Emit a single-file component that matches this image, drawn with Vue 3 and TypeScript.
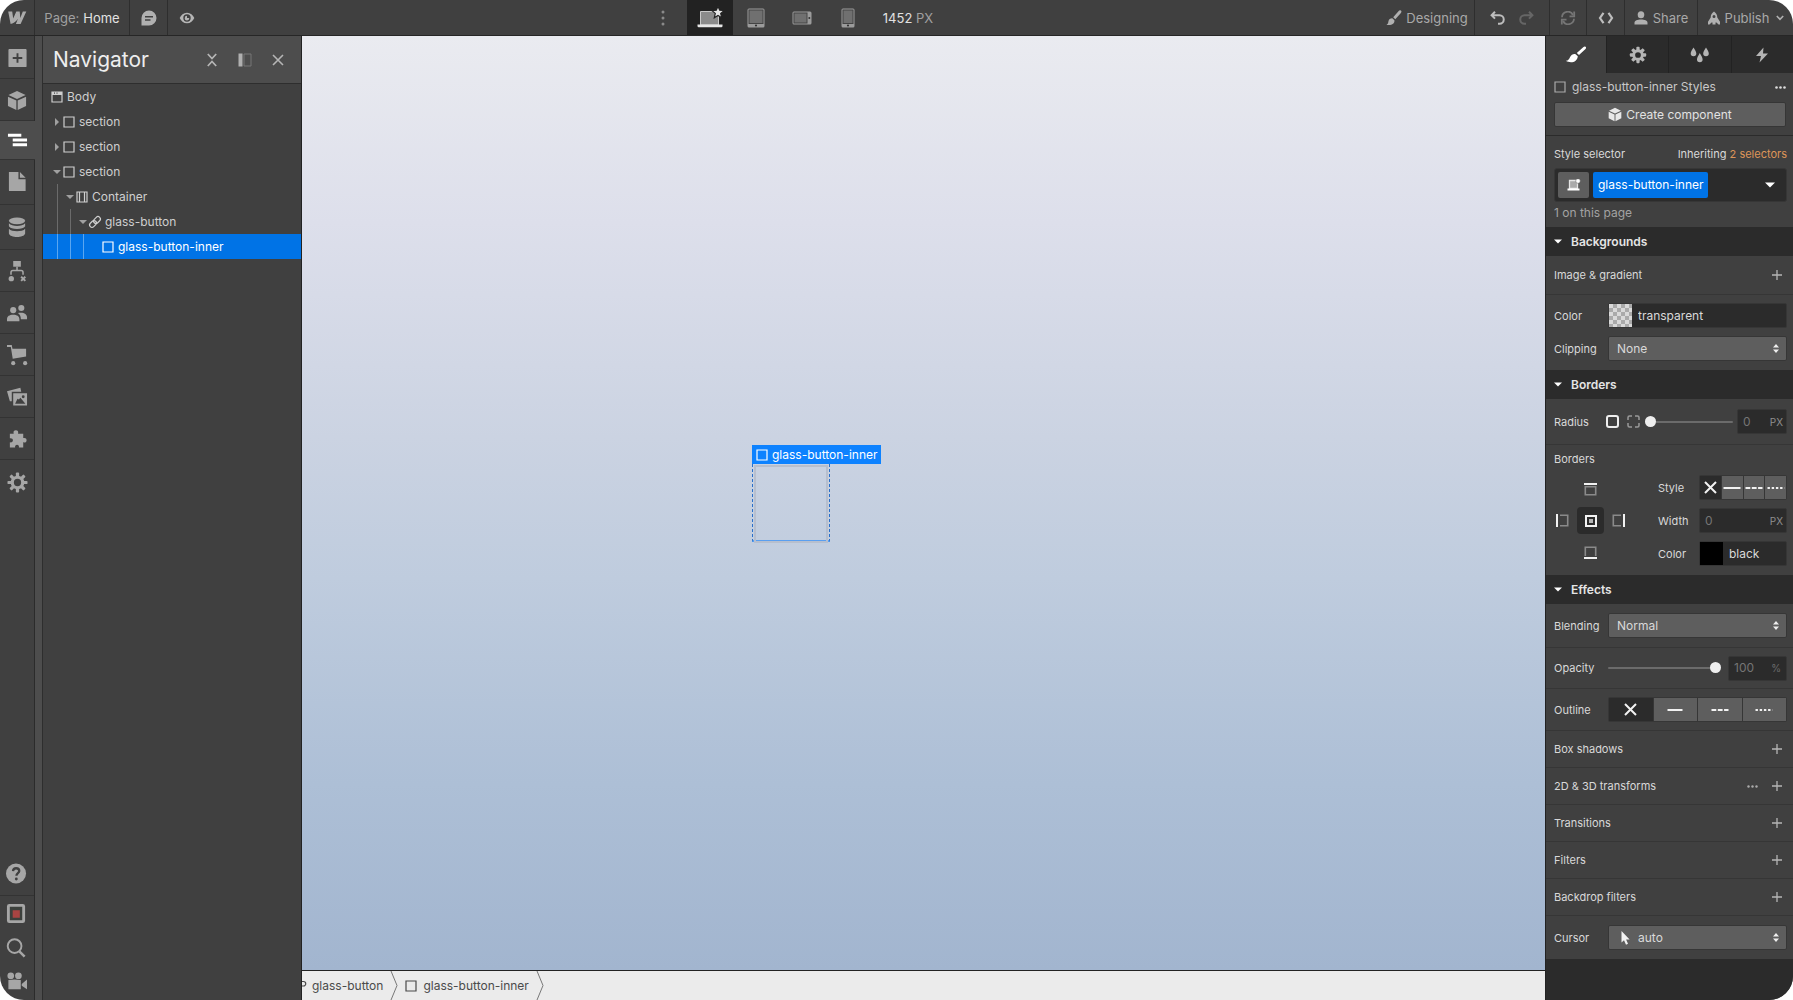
<script setup lang="ts">
import { ref } from 'vue'

interface TreeRow {
  label: string
  level: number
  icon: 'body' | 'box' | 'container' | 'link'
  arrow: 'none' | 'right' | 'down'
  selected?: boolean
}

const tree: TreeRow[] = [
  { label: 'Body', level: 0, icon: 'body', arrow: 'none' },
  { label: 'section', level: 0, icon: 'box', arrow: 'right' },
  { label: 'section', level: 0, icon: 'box', arrow: 'right' },
  { label: 'section', level: 0, icon: 'box', arrow: 'down' },
  { label: 'Container', level: 1, icon: 'container', arrow: 'down' },
  { label: 'glass-button', level: 2, icon: 'link', arrow: 'down' },
  { label: 'glass-button-inner', level: 3, icon: 'box', arrow: 'none', selected: true },
]

const effects = ['Box shadows', '2D & 3D transforms', 'Transitions', 'Filters', 'Backdrop filters']
const lineStyles = ['none', 'solid', 'dashed', 'dotted']

const radius = ref(0)
const opacity = ref(100)
const borderStyle = ref('none')
const outlineStyle = ref('none')
const gearTeeth = [0, 45, 90, 135, 180, 225, 270, 315]
</script>

<template>
  <div class="app">
    <header class="topbar">
      <button class="cell logo" aria-label="Webflow menu">
        <svg width="20" height="14" viewBox="0 0 20 14"><path fill="#ababab" d="M19.300.5 13.600 13H8.900l2-5.200C9.300 10.400 7 12.200 3.600 13L1.200.500h4l1 7L9.300.500h3.400l.6 6.500L15.800.500z" /></svg>
      </button>
      <button class="cell page"><span class="muted">Page:</span><span>Home</span></button>
      <button class="cell comment" aria-label="Comments">
        <svg width="16" height="16" viewBox="0 0 16 16"><path fill="#b0b0b0" d="M8 .5a7.500 7.500 0 1 1 0 15H.5V8A7.500 7.500 0 0 1 8 .5z" /><path stroke="#404040" stroke-width="1.500" d="M4 6.800h8M4 10h5.500" /></svg>
      </button>
      <button class="cell eye" aria-label="Preview">
        <svg width="16" height="12" viewBox="0 0 16 12"><path fill="#b5b5b5" fill-rule="evenodd" d="M8 .7c3.500 0 6 2.300 7.300 5.300C14 9 11.500 11.300 8 11.300S2 9 .7 6C2 3 4.500.7 8 .7zM8 2.300a3.700 3.700 0 1 0 0 7.400 3.700 3.700 0 0 0 0-7.400z" /><path fill="#b5b5b5" d="M8 3.800v2.200h2.300A2.300 2.300 0 1 1 8 3.800z" /></svg>
      </button>
      <div class="devices">
        <button class="cell dots" aria-label="More breakpoints">
          <svg width="4" height="16" viewBox="0 0 4 16" fill="#8a8a8a"><circle cx="2" cy="2" r="1.500" /><circle cx="2" cy="8" r="1.500" /><circle cx="2" cy="14" r="1.500" /></svg>
        </button>
        <button class="device current" aria-label="Desktop">
          <svg width="26" height="24" viewBox="0 0 26 24"><path fill="#8b8b8b" stroke="#c9c9c9" d="M3.500 5.500h18V19h-18z" /><path fill="#e6e6e6" d="M.500 18.500h25V20a1.200 1.200 0 0 1-1.200 1.200H1.700A1.200 1.200 0 0 1 .5 20z" /><path fill="#e6e6e6" stroke="#222" stroke-width="1.200" d="m21 .2 1.700 4 4.300.4-3.300 2.800 1 4.300L21 9.400l-3.700 2.300 1-4.300L15 4.600l4.300-.4z" /></svg>
        </button>
        <button class="device" aria-label="Tablet">
          <svg width="18" height="20" viewBox="0 0 18 20"><rect x=".5" y=".5" width="17" height="19" rx="1.500" fill="#9b9b9b" /><rect x="2" y="2" width="14" height="13.500" fill="#707070" stroke="#444" /><circle cx="9" cy="17.500" r="1.100" fill="#333" /></svg>
        </button>
        <button class="device" aria-label="Mobile landscape">
          <svg width="20" height="14" viewBox="0 0 20 14"><rect x=".5" y=".5" width="19" height="13" rx="1.500" fill="#9b9b9b" /><rect x="2" y="2" width="13" height="10" fill="#707070" stroke="#444" /><circle cx="17.300" cy="7" r="1" fill="#333" /></svg>
        </button>
        <button class="device" aria-label="Mobile portrait">
          <svg width="14" height="20" viewBox="0 0 14 20"><rect x=".5" y=".5" width="13" height="19" rx="1.500" fill="#9b9b9b" /><rect x="2" y="2" width="10" height="13.500" fill="#707070" stroke="#444" /><circle cx="7" cy="17.500" r="1.100" fill="#333" /></svg>
        </button>
        <div class="width-readout"><b>1452</b> <span>PX</span></div>
      </div>
      <button class="cell designing">
        <svg width="16" height="16" viewBox="0 0 16 16" fill="#b0b0b0"><path d="M14.800.600c1 .7.700 1.700.1 2.400L9.300 9.200 7.200 7.300 12.700 1c.6-.6 1.300-.9 2.100-.4zM6.300 8.300l2.100 1.900c.5 3.200-2.700 5.600-7.900 4.700 1.800-.8 1.600-2.100 2-3.800.5-1.900 1.900-2.900 3.800-2.800z" /></svg>
        <span>Designing</span>
      </button>
      <div class="cell history">
        <button aria-label="Undo"><svg width="15" height="14" viewBox="0 0 15 14" fill="none" stroke="#bdbdbd" stroke-width="2"><path d="M5 .800 1.600 4.200 5 7.600M1.800 4.200H9.500a4.200 4.200 0 0 1 0 8.500H8" /></svg></button>
        <button aria-label="Redo"><svg width="15" height="14" viewBox="0 0 15 14" fill="none" stroke="#666" stroke-width="2"><path d="m10 .8 3.400 3.400L10 7.600M13.200 4.200H5.500a4.200 4.200 0 0 0 0 8.500H7" /></svg></button>
      </div>
      <button class="cell sync" aria-label="Save state">
        <svg width="16" height="14" viewBox="0 0 16 14" fill="none" stroke="#757575" stroke-width="1.800"><path d="M2 6.200A5.800 5.800 0 0 1 13 4M14 7.800A5.800 5.800 0 0 1 3 10" /><path d="M14.200.5v4.800H9.500M1.800 13.500V8.700h4.700" /></svg>
      </button>
      <button class="cell code" aria-label="Export code">
        <svg width="16" height="12" viewBox="0 0 16 12" fill="none" stroke="#bdbdbd" stroke-width="2.200"><path d="M5.500.8 2 6l3.500 5.200M10.500.8 14 6l-3.500 5.200" /></svg>
      </button>
      <button class="cell share">
        <svg width="14" height="14" viewBox="0 0 14 14" fill="#b0b0b0"><ellipse cx="7" cy="3.700" rx="3.300" ry="3.500" /><path d="M.5 13.500v-1.700C.5 9.500 3.500 8.600 7 8.600s6.500.9 6.500 3.200v1.700z" /></svg>
        <span>Share</span>
      </button>
      <button class="cell publish">
        <svg width="14" height="14" viewBox="0 0 14 14"><path fill="#b0b0b0" fill-rule="evenodd" d="M7 .5c2 1.500 3.300 3.200 3.300 6L13 10.700v2.800h-1.500l-2-2h-1v2h-3v-2h-1l-2 2H1v-2.800L3.700 6.500c0-2.800 1.300-4.500 3.300-6zM7 4a1.500 1.500 0 1 0 0 3 1.500 1.500 0 0 0 0-3z" /></svg>
        <span>Publish</span>
        <svg class="chev" width="8" height="6" viewBox="0 0 8 6"><path fill="none" stroke="#b0b0b0" stroke-width="1.600" d="m.800 1 3.200 3.300L7.200 1" /></svg>
      </button>
    </header>

    <div class="workspace">
      <nav class="rail" aria-label="Tools">
        <button aria-label="Add"><svg viewBox="0 0 22 22"><rect x="1.500" y="1" width="19" height="19" rx="1" fill="#a6a6a6" /><path stroke="#404040" stroke-width="2" d="M11 5.500v10M6 10.500h10" /></svg></button>
        <button aria-label="Components"><svg viewBox="0 0 22 22" fill="#a6a6a6"><path d="m10.500 1 9 4.200-9 4.200-9-4.200zM1 7l8.800 4.100V21L1 16.800zM20 7l-8.800 4.100V21l8.800-4.200z" /></svg></button>
        <button class="short on" aria-label="Navigator"><svg viewBox="0 0 22 22" fill="#fff"><path d="M1 4h14v3H1zM6 9h15v3H6zM6 14h15v3H6z" /></svg></button>
        <button class="tall" aria-label="Pages"><svg viewBox="0 0 22 22" fill="#a6a6a6"><path d="M2 0h10v7.500h7.500V20H3a1 1 0 0 1-1-1zM13.500 0l6 6h-6z" /></svg></button>
        <button class="tall" aria-label="CMS"><svg viewBox="0 0 22 22" fill="#a6a6a6"><ellipse cx="10.500" cy="4" rx="8.500" ry="3.500" /><path d="M2 6.500c1.500 2.200 5 2.800 8.500 2.800S17.500 8.700 19 6.500v3.300c-1 2-4.500 2.800-8.500 2.800S3 11.800 2 9.800zM2 12.200c1.500 1.900 5 2.600 8.500 2.600s7-.7 8.500-2.600v5.200c-.5 2.500-4.500 3.600-8.500 3.600S2.500 19.900 2 17.400z" /></svg></button>
        <button aria-label="Logic"><svg viewBox="0 0 22 22"><path fill="#a6a6a6" d="M6.500 0h8v6h-8z" /><circle cx="4.500" cy="18.500" r="2.800" fill="#a6a6a6" /><path fill="none" stroke="#a6a6a6" stroke-width="1.600" d="M10.500 6v4M4.200 14.500V12a2 2 0 0 1 2-2h8.600a2 2 0 0 1 2 2v2.500" /><path stroke="#a6a6a6" stroke-width="2" d="m14.800 16.500 4.400 4.400m0-4.400-4.400 4.400" /></svg></button>
        <button aria-label="Users"><svg viewBox="0 0 22 22" fill="#a6a6a6"><circle cx="6.500" cy="7.500" r="3.200" /><circle cx="15" cy="5.300" r="3.200" /><path d="M0 19v-2c0-3 2.500-4.600 6.500-4.600S13 14 13 17v2zM11.500 10.600c5.500-1.200 9.500.8 9.500 4.400v2h-6.500c0-2.900-1-4.900-3-6.400z" /></svg></button>
        <button aria-label="Ecommerce"><svg viewBox="0 0 22 22" fill="#a6a6a6"><path d="M0 0h5l.7 4H20v8L6 14.500 4 2H0z" /><circle cx="6.500" cy="19" r="2.200" /><circle cx="19" cy="19" r="2.200" /></svg></button>
        <button aria-label="Assets"><svg viewBox="0 0 22 22"><path fill="#a6a6a6" d="M0 4.500 14 .8l.9 4.200H5v10H3z" /><path fill="#a6a6a6" fill-rule="evenodd" d="M6.500 6.500H21v13H6.500zm2 11h10.800L14 11.200l-1.500 2-1.500-1zM17 8.700a1.500 1.500 0 1 0 0 3 1.500 1.500 0 0 0 0-3z" /></svg></button>
        <button aria-label="Apps"><svg viewBox="0 0 22 22" fill="#a6a6a6"><path d="M3 5h4c-.6-3 .5-3.800 2.300-3.800S12.200 2 11.600 5H17v4.500c2.300-.5 3.500.4 3.500 2.200S19.300 14.500 17 14v5.500h-4.500c.3-2-.6-3-2-3s-2.300 1-2 3H3V14c2.200.4 3.200-.8 3.200-2.200S5.200 9.500 3 9.700z" /></svg></button>
        <button aria-label="Settings" class="last"><svg viewBox="0 0 22 22"><g fill="#a6a6a6"><rect v-for="a in gearTeeth" :key="a" x="9.300" y="0.500" width="3.400" height="5" rx="1" :transform="`rotate(${a} 11 11)`" /></g><circle cx="11" cy="11" r="5.500" fill="none" stroke="#a6a6a6" stroke-width="3.400" /></svg></button>
        <div class="rail-foot">
          <button class="help" aria-label="Help"><svg viewBox="0 0 22 22"><circle cx="10.500" cy="11" r="10.500" fill="#a6a6a6" /><path fill="none" stroke="#404040" stroke-width="2.400" d="M7.300 8.500c.2-2 1.500-3 3.300-3s3.300 1.200 3.300 2.900c0 2.300-3 2.400-3 5" /><circle cx="10.800" cy="16.800" r="1.500" fill="#404040" /></svg></button>
          <button aria-label="Record"><svg viewBox="0 0 22 22"><rect x="2.500" y="2.500" width="16" height="17" rx="1" fill="#3c403c" stroke="#a6a6a6" stroke-width="3" /><path fill="#a94442" d="M7 7.500h7.500v8H7z" /></svg></button>
          <button aria-label="Search"><svg viewBox="0 0 22 22" fill="none" stroke="#a6a6a6"><circle cx="9" cy="9.500" r="7.200" stroke-width="2" /><path stroke-width="2.600" d="m14 15 5.500 5.500" /></svg></button>
          <button aria-label="Video"><svg viewBox="0 0 22 22" fill="#a6a6a6"><circle cx="5" cy="5" r="3.500" /><circle cx="13" cy="5" r="3.500" /><path d="M2.500 9.500 9 8.800l6.500.7V19h-13zM16.500 13.500 22 9v10l-5.500-3.500z" /></svg></button>
        </div>
      </nav>

      <aside class="navigator">
        <div class="nav-head">
          <h1>Navigator</h1>
          <button aria-label="Collapse all"><svg width="12" height="14" viewBox="0 0 12 14" fill="none" stroke="#b5b5b5" stroke-width="1.700"><path d="m1.800 1 4.200 4.500L10.200 1M1.800 13 6 8.500l4.200 4.500" /></svg></button>
          <button aria-label="Pin panel"><svg width="14" height="14" viewBox="0 0 14 14"><path fill="#b0b0b0" d="M.5.500h4v13h-4z" /><path fill="none" stroke="#777" d="M6 1h7v12H6z" /></svg></button>
          <button aria-label="Close"><svg width="12" height="12" viewBox="0 0 12 12" stroke="#b5b5b5" stroke-width="1.600"><path d="m1 1 10 10M11 1 1 11" /></svg></button>
        </div>
        <ul class="tree">
          <li v-for="(row, i) in tree" :key="i" :class="{ selected: row.selected, root: row.icon === 'body' }">
            <span v-for="g in row.level" :key="g" class="guide"></span>
            <span v-if="row.icon !== 'body'" class="arrow">
              <svg v-if="row.arrow === 'right'" width="8" height="8" viewBox="0 0 8 8"><path fill="#a0a0a0" d="M2 0v8l4-4z" /></svg>
              <svg v-else-if="row.arrow === 'down'" width="8" height="8" viewBox="0 0 8 8"><path fill="#a0a0a0" d="M0 2h8L4 6z" /></svg>
            </span>
            <svg class="node" width="12" height="12" viewBox="0 0 12 12" fill="none" stroke="currentColor" stroke-width="1.200">
              <template v-if="row.icon === 'body'"><path d="M1 1h10v10H1z" /><path fill="currentColor" stroke="none" d="M1 1h10v3H1z" /><path stroke="#404040" stroke-width="1" d="M3.500 1.500v1.200M6 1.500v1.200" /></template>
              <path v-else-if="row.icon === 'box'" d="M1 1h10v10H1z" />
              <path v-else-if="row.icon === 'container'" d="M1 1h10v10H1zM3.500 1v10M8.500 1v10" />
              <g v-else transform="rotate(-45 6 6)"><rect x="-.6" y="3.600" width="7.600" height="4.800" rx="2.400" /><rect x="5" y="3.600" width="7.600" height="4.800" rx="2.400" /></g>
            </svg>
            <span>{{ row.label }}</span>
          </li>
        </ul>
      </aside>

      <main class="stage">
        <div class="canvas">
          <div class="selection">
            <div class="tag"><svg width="12" height="12" viewBox="0 0 12 12"><path fill="none" stroke="#fff" stroke-width="1.200" d="M1 1h10v10H1z" /></svg>glass-button-inner</div>
            <div class="element"></div>
          </div>
        </div>
        <nav class="crumbs" aria-label="Breadcrumb">
          <svg class="cut" width="5" height="12" viewBox="0 0 5 12"><path fill="none" stroke="#4a4a4a" stroke-width="1.200" d="M0 1.500h1.500a2.200 2.200 0 0 1 0 4.500H0" /></svg>
          <a href="#">glass-button</a>
          <svg class="sep" width="8" height="29" viewBox="0 0 8 29"><path fill="none" stroke="#777" d="m1 0 6 14.500L1 29" /></svg>
          <svg class="crumb-box" width="12" height="12" viewBox="0 0 12 12"><path fill="none" stroke="#4a4a4a" stroke-width="1.200" d="M1 1h10v10H1z" /></svg>
          <a href="#">glass-button-inner</a>
          <svg class="sep" width="8" height="29" viewBox="0 0 8 29"><path fill="none" stroke="#777" d="m1 0 6 14.500L1 29" /></svg>
        </nav>
      </main>

      <aside class="styles">
        <div class="tabs">
          <button class="active" aria-label="Style"><svg width="22" height="18" viewBox="0 0 22 18" fill="#fff"><path d="M20.500.800c1 .8.500 1.600 0 2.200L14 9l-2.200-1.900L18.500 1c.6-.5 1.300-.7 2-.2zM10.600 8.200l2.200 2c-.3 5.500-6.600 7.800-12 4.600 2.500.2 3.300-1.600 4.300-3.700 1.200-2.400 3.200-3.400 5.500-2.900z" /></svg></button>
          <button aria-label="Settings"><svg width="18" height="18" viewBox="0 0 22 22"><g fill="#b5b5b5"><rect v-for="a in gearTeeth" :key="a" x="9" y="1" width="4" height="5" rx="1" :transform="`rotate(${a} 11 11)`" /></g><circle cx="11" cy="11" r="5.300" fill="none" stroke="#b5b5b5" stroke-width="3.600" /></svg></button>
          <button aria-label="Style manager"><svg width="20" height="16" viewBox="0 0 20 16" fill="#b5b5b5"><path d="M3.500.5C5 3.300 6.300 4.700 6.300 6.500a2.800 2.800 0 0 1-5.600 0C.7 4.700 2 3.300 3.500.5zM16 .5c1.500 2.800 2.800 4.200 2.800 6a2.800 2.800 0 0 1-5.600 0c0-1.800 1.300-3.200 2.800-6zM9.800 6c1.500 2.800 2.800 4.700 2.800 6.500a2.800 2.800 0 0 1-5.600 0c0-1.800 1.300-3.700 2.800-6.500z" /></svg></button>
          <button aria-label="Interactions"><svg width="14" height="16" viewBox="0 0 14 16" fill="#b5b5b5"><path d="M8.500.5 1 9h5L4.500 15.500 13 6.500H8z" /></svg></button>
        </div>

        <div class="title-block">
          <div class="title"><svg width="12" height="12" viewBox="0 0 12 12"><path fill="none" stroke="#aaa" stroke-width="1.200" d="M1 1h10v10H1z" /></svg><span>glass-button-inner Styles</span>
            <button aria-label="More"><svg width="11" height="3" viewBox="0 0 11 3" fill="#ddd"><circle cx="1.500" cy="1.500" r="1.300" /><circle cx="5.500" cy="1.500" r="1.300" /><circle cx="9.500" cy="1.500" r="1.300" /></svg></button></div>
          <button class="create"><svg width="14" height="15" viewBox="0 0 21 22" fill="#e8e8e8"><path d="m10.500 1 9 4.200-9 4.200-9-4.200zM1 7l8.800 4.100V21L1 16.800zM20 7l-8.800 4.100V21l8.800-4.200z" /></svg>Create component</button>
        </div>

        <div class="selector-block">
          <div class="selector-labels"><span>Style selector</span><span>Inheriting <a href="#">2 selectors</a></span></div>
          <div class="selector">
            <button class="state" aria-label="Breakpoint"><svg width="14" height="12" viewBox="0 0 14 12"><path fill="#aaa" stroke="#e5e5e5" stroke-width="1.300" d="M2.500 1.500h8v8h-8z" /><path stroke="#fff" stroke-width="2" d="M.5 10.500h12" /><circle cx="11" cy="2" r="2.300" fill="#fff" stroke="#5e5e5e" stroke-width=".5" /></svg></button>
            <button class="chip">glass-button-inner</button>
            <button class="drop" aria-label="Open selectors"><svg width="10" height="6" viewBox="0 0 10 6"><path fill="#fff" d="M0 .5h10l-5 5z" /></svg></button>
          </div>
          <p>1 on this page</p>
        </div>

        <h2><svg width="8" height="5" viewBox="0 0 8 5"><path fill="#fff" d="M0 .5h8l-4 4z" /></svg>Backgrounds</h2>
        <div class="row gradient"><span>Image &amp; gradient</span><button class="plus" aria-label="Add background"><svg width="10" height="10" viewBox="0 0 10 10"><path stroke="#b5b5b5" stroke-width="1.300" d="M5 0v10M0 5h10" /></svg></button></div>
        <div class="fields line">
          <div class="field"><label for="bg-color">Color</label><div class="swatch-input"><span class="swatch checks"></span><input id="bg-color" value="transparent" /></div></div>
          <div class="field"><label for="clipping">Clipping</label><div class="pick"><select id="clipping"><option>None</option></select><svg width="6" height="9" viewBox="0 0 6 9"><path fill="#eee" d="M0 3.500h6L3 0zM0 5.500h6L3 9z" /></svg></div></div>
        </div>

        <h2><svg width="8" height="5" viewBox="0 0 8 5"><path fill="#fff" d="M0 .5h8l-4 4z" /></svg>Borders</h2>
        <div class="row radius">
          <label for="radius">Radius</label>
          <button aria-label="All corners"><svg width="13" height="13" viewBox="0 0 13 13"><rect x="1" y="1" width="11" height="11" rx="2" fill="none" stroke="#eee" stroke-width="2" /></svg></button>
          <button aria-label="Individual corners"><svg width="13" height="13" viewBox="0 0 13 13"><path fill="none" stroke="#999" stroke-width="1.500" d="M1 5V2.500A1.500 1.500 0 0 1 2.500 1H5M8 1h2.500A1.500 1.500 0 0 1 12 2.500V5M12 8v2.500a1.500 1.500 0 0 1-1.500 1.500H8M5 12H2.500A1.500 1.500 0 0 1 1 10.500V8" /></svg></button>
          <input id="radius" v-model.number="radius" type="range" min="0" max="100" />
          <div class="unit"><input aria-label="Radius value" :value="radius" /><span>PX</span></div>
        </div>
        <div class="borders line">
          <div class="sub">Borders</div>
          <div class="border-grid">
            <div class="sides">
              <button class="top" aria-label="Top border"><svg width="13" height="13" viewBox="0 0 13 13"><path fill="none" stroke="#8a8a8a" stroke-width="1.600" d="M1.300 3v8.700h10.400V3M1.300 3.800h10.400" /><path stroke="#f2f2f2" stroke-width="2" d="M0 1h13" /></svg></button>
              <button class="left" aria-label="Left border"><svg width="13" height="13" viewBox="0 0 13 13"><path fill="none" stroke="#8a8a8a" stroke-width="1.600" d="M4 1.300h7.700v10.400H4" /><path stroke="#f2f2f2" stroke-width="2" d="M1 0v13" /></svg></button>
              <button class="all" aria-label="All borders"><svg width="12" height="12" viewBox="0 0 12 12"><path fill="none" stroke="#f2f2f2" stroke-width="2" d="M1 1h10v10H1z" /><path fill="#b5b5b5" d="M4 4h4v4H4z" /></svg></button>
              <button class="right" aria-label="Right border"><svg width="13" height="13" viewBox="0 0 13 13"><path fill="none" stroke="#8a8a8a" stroke-width="1.600" d="M9 1.300H1.300v10.400H9" /><path stroke="#f2f2f2" stroke-width="2" d="M12 0v13" /></svg></button>
              <button class="bottom" aria-label="Bottom border"><svg width="13" height="13" viewBox="0 0 13 13"><path fill="none" stroke="#8a8a8a" stroke-width="1.600" d="M1.300 10V1.300h10.400V10" /><path stroke="#f2f2f2" stroke-width="2" d="M0 12h13" /></svg></button>
            </div>
            <div class="border-fields">
              <div class="bf"><span>Style</span>
                <div class="segments">
                  <button v-for="s in lineStyles" :key="s" :class="{ on: borderStyle === s }" :aria-label="s" @click="borderStyle = s">
                    <svg v-if="s === 'none'" width="13" height="13" viewBox="0 0 13 13"><path stroke="#f2f2f2" stroke-width="2" d="m1 1 11 11M12 1 1 12" /></svg>
                    <svg v-else width="18" height="2" viewBox="0 0 18 2"><path stroke="#f2f2f2" stroke-width="2" :stroke-dasharray="s === 'dashed' ? '4.800 1.500' : s === 'dotted' ? '2.400 1.800' : 'none'" d="M.5 1h17" /></svg>
                  </button>
                </div>
              </div>
              <div class="bf"><label for="bwidth">Width</label><div class="unit"><input id="bwidth" value="0" /><span>PX</span></div></div>
              <div class="bf"><label for="bcolor">Color</label><div class="swatch-input"><span class="swatch black"></span><input id="bcolor" value="black" /></div></div>
            </div>
          </div>
        </div>

        <h2><svg width="8" height="5" viewBox="0 0 8 5"><path fill="#fff" d="M0 .5h8l-4 4z" /></svg>Effects</h2>
        <div class="row blending"><label for="blending">Blending</label><div class="pick"><select id="blending"><option>Normal</option></select><svg width="6" height="9" viewBox="0 0 6 9"><path fill="#eee" d="M0 3.500h6L3 0zM0 5.500h6L3 9z" /></svg></div></div>
        <div class="row opacity line"><label for="opacity">Opacity</label><input id="opacity" v-model.number="opacity" type="range" min="0" max="100" /><div class="unit"><input aria-label="Opacity value" :value="opacity" /><span class="dim">%</span></div></div>
        <div class="row outline line"><span class="name">Outline</span>
          <div class="segments">
            <button v-for="s in lineStyles" :key="s" :class="{ on: outlineStyle === s }" :aria-label="s" @click="outlineStyle = s">
              <svg v-if="s === 'none'" width="13" height="13" viewBox="0 0 13 13"><path stroke="#f2f2f2" stroke-width="2" d="m1 1 11 11M12 1 1 12" /></svg>
              <svg v-else width="18" height="2" viewBox="0 0 18 2"><path stroke="#f2f2f2" stroke-width="2" :stroke-dasharray="s === 'dashed' ? '4.800 1.500' : s === 'dotted' ? '2.400 1.800' : 'none'" :d="s === 'solid' ? 'M1.500 1h15' : 'M.5 1h17'" /></svg>
            </button>
          </div>
        </div>
        <div v-for="name in effects" :key="name" class="row effect line">
          <span>{{ name }}</span>
          <button v-if="name.startsWith('2D')" class="more" aria-label="Transform settings"><svg width="11" height="3" viewBox="0 0 11 3" fill="#aaa"><circle cx="1.500" cy="1.500" r="1.200" /><circle cx="5.500" cy="1.500" r="1.200" /><circle cx="9.500" cy="1.500" r="1.200" /></svg></button>
          <button class="plus" :aria-label="`Add ${name}`"><svg width="10" height="10" viewBox="0 0 10 10"><path stroke="#b5b5b5" stroke-width="1.300" d="M5 0v10M0 5h10" /></svg></button>
        </div>
        <div class="row cursor line"><label for="cursor">Cursor</label><div class="pick with-icon"><svg class="pointer" width="9" height="14" viewBox="0 0 9 14"><path fill="#f2f2f2" d="M.5 0v11.500L3 9.300 5 13.700l2-.9-1.900-4.200h3.500z" /></svg><select id="cursor"><option>auto</option></select><svg width="6" height="9" viewBox="0 0 6 9"><path fill="#eee" d="M0 3.500h6L3 0zM0 5.500h6L3 9z" /></svg></div></div>
        <div class="rest"></div>
      </aside>
    </div>
  </div>
</template>

<style>
body { background: #fff; }
</style>

<style scoped>
* { box-sizing: border-box; }
.app {
  display: flex; flex-direction: column; min-height: 100vh; overflow: hidden;
  border-radius: 24px; background: #404040; color: #d9d9d9;
  font: 12px/16px Inter, "Liberation Sans", sans-serif;
}
button { display: flex; align-items: center; justify-content: center; margin: 0; padding: 0; border: 0; background: none; color: inherit; font: inherit; }
input, select { min-width: 0; margin: 0; padding: 0; border: 0; background: none; color: inherit; font: inherit; outline: 0; }
svg { display: block; flex: none; }
h1, h2, p, ul { margin: 0; padding: 0; font-weight: 400; }
a { color: inherit; text-decoration: none; }

.topbar { display: flex; height: 36px; border-bottom: 1px solid #262626; font-size: 13px; }
.cell { height: 35px; flex: none; border-right: 1px solid #2e2e2e; color: #a9a9a9; }
.logo { width: 35px; }
.page { width: 95px; gap: 4px; color: #e2e2e2; }
.muted { color: #a0a0a0; }
.comment { width: 38px; }
.eye { width: 38px; border-right: 0; }
.devices { display: flex; flex: 1; align-items: center; justify-content: center; padding-right: 14px; }
.dots { width: 48px; border-right: 0; }
.device { width: 46px; height: 35px; }
.current { background: #222; }
.width-readout { margin-left: 12px; color: #a0a0a0; }
.width-readout b { color: #e2e2e2; font-weight: 400; }
.designing { width: 95px; gap: 4px; }
.history { display: flex; align-items: center; justify-content: center; width: 75px; gap: 14px; }
.sync { width: 37px; }
.code { width: 38px; }
.share { width: 73px; gap: 5px; }
.publish { width: 95px; gap: 4px; border-right: 0; }
.chev { margin-left: 3px; }

.workspace { display: flex; flex: 1; }
.rail { display: flex; flex-direction: column; width: 35px; flex: none; padding-top: 1px; border-right: 1px solid #2b2b2b; }
.rail button { width: 34px; height: 42px; flex: none; padding-top: 2px; border-bottom: 1px solid #333; }
.rail button svg { width: 21px; height: 21px; }
.rail .short { height: 39px; width: 35px; padding-top: 0; background: #4d4d4d; }
.rail .tall { height: 45px; padding-top: 0; }
.rail .last { border-bottom: 0; }
.rail-foot { margin-top: auto; padding-bottom: 2px; }
.rail .rail-foot button { height: 34px; padding: 0 1px 0 0; border-bottom: 0; }
.rail .rail-foot .help { height: 45px; border-bottom: 1px solid #333; }

.navigator { display: flex; flex-direction: column; width: 267px; flex: none; border-left: 7px solid #4d4d4d; border-right: 1px solid #222; }
.nav-head { display: flex; align-items: center; height: 48px; padding: 0 7px 0 10px; border-bottom: 1px solid #2e2e2e; border-left: 1px solid #2e2e2e; background: #4d4d4d; }
h1 { flex: 1; color: #eee; font-size: 21px; line-height: 28px; }
.nav-head button { width: 33px; height: 33px; }
.tree { flex: 1; list-style: none; border-left: 1px solid #2e2e2e; }
.tree li { display: flex; align-items: center; height: 25px; padding-left: 8px; color: #cfcfcf; }
.tree .selected { background: #0073e6; color: #fff; }
.guide { width: 13px; height: 25px; flex: none; padding-left: 6px; }
.guide::before { content: ""; display: block; width: 1px; height: 25px; background: #6b6b6b; }
.selected .guide::before { background: #5aa6f0; }
.arrow { display: flex; width: 12px; flex: none; justify-content: flex-start; padding-left: 2px; }
.node { margin-right: 4px; overflow: visible; }

.stage { display: flex; flex: 1; flex-direction: column; min-width: 0; }
.canvas { position: relative; flex: 1; background: linear-gradient(#eaebf0 0%, #dddfeb 20%, #cbd3e2 43%, #bfccde 58%, #adbfd6 80%, #a2b5cf 100%); }
.selection { position: absolute; left: 450px; top: 409px; }
.tag { display: flex; align-items: center; gap: 4px; height: 19px; padding: 0 4px; background: #0d82ff; color: #fff; }
.element { width: 78px; height: 78px; padding: 1px; border: 1px dashed #2a6fc9; border-bottom: 2px solid #5a9ff0; border-top: 0; }
.element::before { content: ""; display: block; height: 100%; border: 2px solid #b7bfce; }
.crumbs { display: flex; align-items: center; height: 30px; border-top: 1px solid #222; background: #ebebeb; color: #4a4a4a; }
.cut { margin-right: 5px; }
.sep { margin: 0 7px; }
.crumb-box { margin-right: 6px; }

.styles { display: flex; flex-direction: column; width: 248px; flex: none; border-left: 1px solid #222; font-size: 11px; }
.tabs { display: flex; height: 37px; background: #2b2b2b; }
.tabs button { flex: 1; border-left: 1px solid #222; }
.tabs .active { flex: none; width: 60px; background: #404040; border-left: 0; }
.title-block { height: 63px; padding: 6px 7px 0 8px; border-bottom: 1px solid #2b2b2b; font-size: 12px; }
.title { display: flex; align-items: center; height: 16px; gap: 6px; color: #c8c8c8; }
.title span { flex: 1; }
.create { width: 100%; height: 25px; margin-top: 7px; gap: 4px; border: 1px solid #363636; border-radius: 2px; background: #5e5e5e; color: #e2e2e2; }
.selector-block { height: 91px; padding: 10px 6px 0 8px; }
.selector-labels { display: flex; justify-content: space-between; }
.selector-labels a { color: #de9559; }
.selector { display: flex; align-items: center; height: 34px; margin-top: 6px; padding: 0 3px; gap: 4px; border: 1px solid #363636; border-radius: 3px; background: #2b2b2b; font-size: 12px; }
.state { width: 31px; height: 26px; border-radius: 2px; background: #5e5e5e; }
.chip { height: 26px; padding: 0 5px; border-radius: 2px; background: #0073e6; color: #fff; }
.drop { width: 26px; height: 26px; margin-left: auto; }
.selector-block p { margin-top: 3px; color: #a3a3a3; font-size: 12px; }
h2 { display: flex; align-items: center; height: 29px; flex: none; padding-left: 8px; gap: 9px; background: #2b2b2b; color: #e5e5e5; font-size: 12px; font-weight: 600; }
.row { display: flex; align-items: center; flex: none; padding: 0 6px 0 8px; }
.line { border-top: 1px solid #363636; }
.plus { width: 20px; height: 20px; margin-left: auto; }
.gradient { height: 38px; }
.fields { display: flex; flex-direction: column; gap: 8px; height: 76px; padding: 8px 6px 0 8px; }
.field { display: flex; align-items: center; height: 25px; }
.field label, .blending label, .opacity label, .outline .name, .cursor label { width: 54px; flex: none; }
.swatch-input { display: flex; align-items: center; flex: 1; min-width: 0; height: 25px; border: 1px solid #363636; border-radius: 2px; background: #2b2b2b; font-size: 12px; }
.swatch-input input { flex: 1; width: 0; margin-left: 6px; }
.swatch { width: 23px; height: 23px; flex: none; }
.checks { background: repeating-conic-gradient(#aaa 0 25%, #d9d9d9 0 50%) 0 0 / 8px 8px; }
.black { background: #000; }
.pick { display: flex; align-items: center; flex: 1; height: 25px; padding: 0 7px 0 8px; border: 1px solid #363636; border-radius: 2px; background: #5e5e5e; font-size: 12px; }
.pick select { flex: 1; height: 23px; appearance: none; }
.with-icon { padding-left: 12px; gap: 8px; }
.unit { display: flex; align-items: center; height: 25px; padding: 0 3px 0 5px; border: 1px solid #363636; border-radius: 2px; background: #2b2b2b; color: #757575; font-size: 12px; }
.unit input { flex: 1; width: 0; }
.unit span { color: #8f8f8f; font-size: 10px; }
.unit .dim { padding-right: 2px; color: #6b6b6b; }
.radius { height: 45px; }
.radius label { width: 52px; }
.radius button { width: 13px; margin-right: 8px; }
.radius button + button { margin-right: 5px; }
.radius input[type="range"] { flex: 1; margin-right: 4px; }
.radius .unit { width: 50px; }
input[type="range"] { height: 12px; appearance: none; }
input[type="range"]::-webkit-slider-runnable-track { height: 2px; border-radius: 1px; background: #6b6b6b; }
input[type="range"]::-webkit-slider-thumb { width: 11px; height: 11px; margin-top: -5px; border-radius: 6px; appearance: none; background: #eee; }
.borders { height: 131px; padding: 6px 6px 0 8px; }
.border-grid { display: flex; align-items: center; justify-content: space-between; margin-top: 4px; }
.sides { display: grid; grid-template-columns: 23px 27px 23px; grid-template-rows: 36px 27px 36px; justify-content: start; }
.sides .top { grid-area: 1 / 2; }
.sides .left { grid-area: 2 / 1; justify-content: flex-start; padding-left: 2px; }
.sides .all { grid-area: 2 / 2; border-radius: 4px; background: #2b2b2b; }
.sides .right { grid-area: 2 / 3; justify-content: flex-end; padding-right: 2px; }
.sides .bottom { grid-area: 3 / 2; }
.border-fields { display: flex; flex-direction: column; gap: 8px; width: 129px; }
.bf { display: flex; align-items: center; height: 25px; }
.bf > :first-child { width: 41px; flex: none; }
.bf > :last-child { flex: 1; min-width: 0; }
.segments { display: flex; flex: 1; height: 25px; gap: 1px; padding: 1px; border-radius: 2px; background: #363636; }
.segments button { flex: 1; background: #5e5e5e; }
.segments .on { background: #2b2b2b; }
.blending { height: 43px; }
.opacity { height: 41px; }
.opacity input[type="range"] { width: 113px; margin-right: 7px; }
.opacity .unit { flex: 1; }
.outline { height: 42px; }
.effect { height: 37px; }
.effect .more { margin-left: auto; width: 20px; height: 20px; }
.effect .more + .plus { margin-left: 5px; }
.cursor { height: 44px; }
.rest { flex: 1; background: #2b2b2b; }
</style>
